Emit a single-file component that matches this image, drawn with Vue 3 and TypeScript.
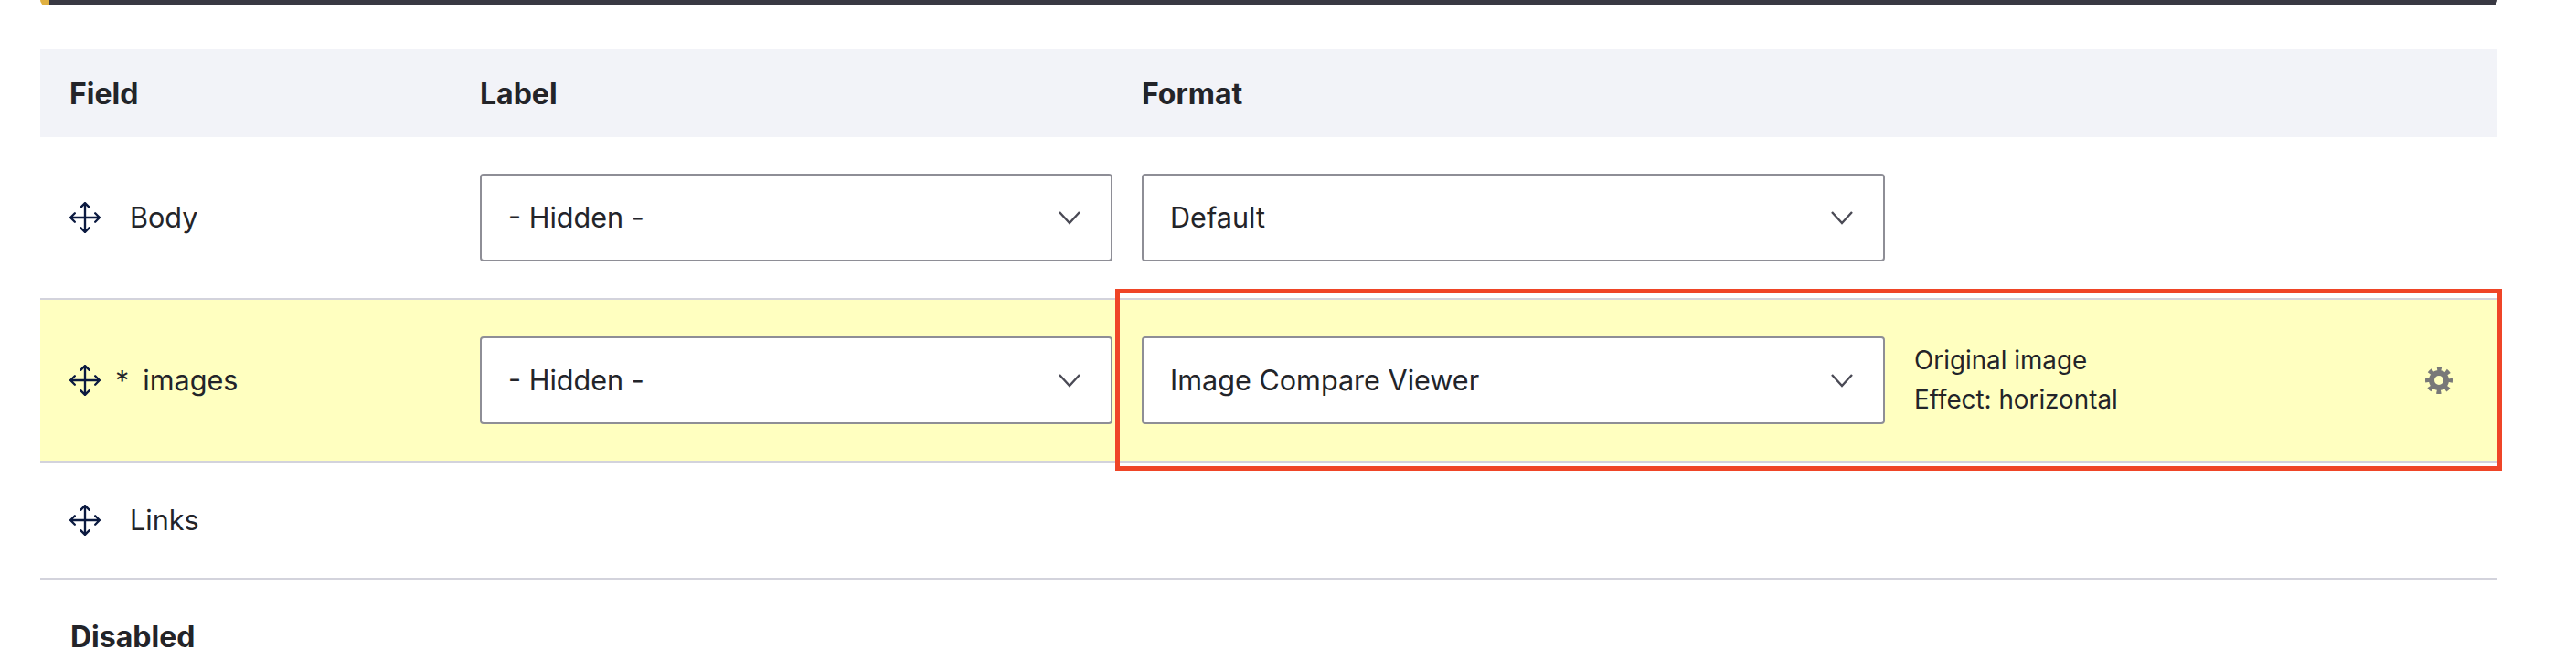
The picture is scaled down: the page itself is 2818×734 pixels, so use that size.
<script setup lang="ts">
interface Row { name: string; asterisk?: boolean; label?: string; format?: string; summary?: string[]; changed?: boolean }
const rows: Row[] = [
  { name: 'Body', label: '- Hidden -', format: 'Default' },
  { name: 'images', asterisk: true, changed: true, label: '- Hidden -', format: 'Image Compare Viewer', summary: ['Original image', 'Effect: horizontal'] },
  { name: 'Links' },
]
</script>

<template>
  <main class="page">
    <div class="topbar"></div>
    <section class="table">
      <div class="grid head">
        <div class="field-cell">Field</div>
        <div>Label</div>
        <div>Format</div>
      </div>
      <div v-for="row in rows" :key="row.name" class="grid row" :class="{ changed: row.changed, tall: row.label }">
        <div class="field-cell name">
          <svg class="move" viewBox="1 1 32 32" fill="none" stroke="#0b1a40" stroke-width="2.2" stroke-linecap="round" stroke-linejoin="round">
            <path d="M17 2v30M2 17h30M12.5 6.5 17 2l4.500 4.500M12.500 27.500 17 32l4.500-4.500M6.500 12.500 2 17l4.500 4.500M27.500 12.500 32 17l-4.500 4.500" />
          </svg>
          <span v-if="row.asterisk" class="star">*</span>
          <span class="text">{{ row.name }}</span>
        </div>
        <div>
          <div v-if="row.label" class="select label-select">
            <span class="text">{{ row.label }}</span>
            <svg class="chev" viewBox="0 0 24 15" fill="none" stroke="#4a4a55" stroke-width="2.400"><path d="M1 1l11 12L23 1" /></svg>
          </div>
        </div>
        <div class="format">
          <div v-if="row.format" class="select format-select">
            <span class="text">{{ row.format }}</span>
            <svg class="chev" viewBox="0 0 24 15" fill="none" stroke="#4a4a55" stroke-width="2.400"><path d="M1 1l11 12L23 1" /></svg>
          </div>
          <div v-if="row.summary" class="summary">
            <div v-for="line in row.summary" :key="line">{{ line }}</div>
          </div>
          <svg v-if="row.summary" class="gear" viewBox="0 0 30 30" fill="none" stroke="#787878">
            <circle cx="15" cy="15" r="8" stroke-width="6" />
            <circle cx="15" cy="15" r="12.500" stroke-width="5" stroke-dasharray="4.800 5.020" stroke-dashoffset="2.400" />
          </svg>
        </div>
      </div>
      <div class="disabled">Disabled</div>
    </section>
    <div class="callout"></div>
  </main>
</template>

<style scoped>
.page {
  position: relative;
  width: 2818px;
  height: 734px;
  overflow: hidden;
  padding: 0 86px 0 44px;
  box-sizing: border-box;
  background: #fff;
  color: #232429;
  font-family: Inter, "Liberation Sans", sans-serif;
  font-size: 30.6px;
}
.topbar {
  height: 6px;
  background: #393943;
  border-left: 10px solid #e0b040;
  border-radius: 0 0 6px 6px;
  box-sizing: border-box;
}
.table {
  margin-top: 48px;
}
.grid {
  display: grid;
  grid-template-columns: 481px 724px 1fr;
  align-items: center;
}
.head {
  height: 96px;
  background: #f2f3f8;
  font-weight: 700;
  font-size: 32px;
}
.field-cell {
  padding-left: 32px;
}
.row {
  box-sizing: border-box;
  border-bottom: 2px solid #d3d3dc;
  height: 128px;
}
.row.tall {
  height: 178px;
}
.row.changed {
  background: #ffffc0;
}
.name {
  display: flex;
  align-items: center;
}
.text {
  margin-top: -2px;
}
.move {
  width: 34px;
  height: 34px;
  flex: none;
  margin-right: 32px;
}
.changed .move {
  margin-right: 16px;
}
.star {
  margin-right: 15px;
}
.select {
  display: flex;
  align-items: center;
  justify-content: space-between;
  height: 96px;
  padding: 0 33px 0 29px;
  box-sizing: border-box;
  background: #fff;
  border: 2px solid #8e8e96;
  border-radius: 4px;
}
.label-select {
  width: 692px;
}
.format-select {
  width: 813px;
  flex: none;
}
.chev {
  width: 24px;
  height: 15px;
}
.format {
  display: flex;
  align-items: center;
}
.summary {
  margin-left: 32px;
  font-size: 27.8px;
  line-height: 43px;
  flex: 1;
}
.gear {
  width: 30px;
  height: 30px;
  margin-right: 49px;
}
.disabled {
  padding-left: 33px;
  height: 128px;
  line-height: 126px;
  font-weight: 700;
  font-size: 32px;
}
.callout {
  position: absolute;
  left: 1220px;
  top: 316px;
  width: 1517px;
  height: 199px;
  box-sizing: border-box;
  border: 5px solid #ef4527;
}
</style>
